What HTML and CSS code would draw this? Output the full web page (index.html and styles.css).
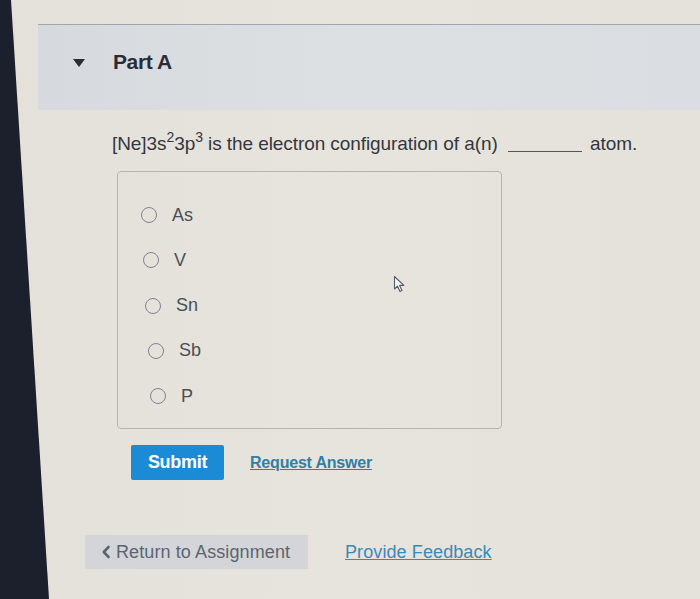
FILE: index.html
```html
<!DOCTYPE html>
<html>
<head>
<meta charset="utf-8">
<link rel="stylesheet" href="styles.css">
</head>
<body>
<div class="bezel"></div>
<div class="page">
  <div class="part-header">
    <span class="caret"></span>
    <span class="part-title">Part A</span>
  </div>
  <div class="content">
    <p class="question">[Ne]3s<sup>2</sup>3p<sup>3</sup> is the electron configuration of a(n) <span class="blank"></span> atom.</p>
    <div class="options">
      <label class="option o1"><span class="radio"></span><span class="label">As</span></label>
      <label class="option o2"><span class="radio"></span><span class="label">V</span></label>
      <label class="option o3"><span class="radio"></span><span class="label">Sn</span></label>
      <label class="option o4"><span class="radio"></span><span class="label">Sb</span></label>
      <label class="option o5"><span class="radio"></span><span class="label">P</span></label>
      <svg class="cursor" width="14" height="18" viewBox="0 0 14 18"><path d="M1.5 1.5 L1.5 14 L4.5 11.2 L7 16.5 L9 15.6 L6.6 10.4 L10.8 10.4 Z" fill="#f4f4f2" stroke="#555b66" stroke-width="1.1" stroke-linejoin="round"/></svg>
    </div>
    <div class="actions">
      <button class="submit">Submit</button>
      <a class="link-bold" href="#">Request Answer</a>
    </div>
  </div>
  <div class="footer">
    <a class="return" href="#"><svg class="chev" width="10" height="14" viewBox="0 0 10 14"><path d="M7.5 2 L2.8 7 L7.5 12" fill="none" stroke="#5d6471" stroke-width="2.6" stroke-linecap="round" stroke-linejoin="round"/></svg>Return to Assignment</a>
    <a class="feedback" href="#">Provide Feedback</a>
  </div>
</div>
</body>
</html>
```
FILE: styles.css
```css
html, body {
  margin: 0;
  padding: 0;
}
body {
  width: 700px;
  height: 599px;
  overflow: hidden;
  position: relative;
  background: linear-gradient(90deg, #e3e1d9 0%, #e6e4dc 50%, #e4e2da 100%);
  font-family: "Liberation Sans", Arial, sans-serif;
  color: #33363d;
}
.bezel {
  position: absolute;
  left: 0;
  top: 0;
  width: 60px;
  height: 599px;
  background: #1c1f2c;
  clip-path: polygon(0 0, 11px 0, 49px 599px, 0 599px);
}
.page {
  padding-top: 24px;
  padding-left: 38px;
}
.part-header {
  height: 86px;
  border-top: 1px solid #a0a6ae;
  background: linear-gradient(90deg, #d6dade 0%, #dde0e3 50%, #dadde1 100%);
  display: flex;
  align-items: flex-start;
  padding-top: 25px;
  box-sizing: border-box;
  padding-left: 35px;
}
.caret {
  width: 0;
  height: 0;
  border-left: 6px solid transparent;
  border-right: 6px solid transparent;
  border-top: 8px solid #2a2d36;
  margin-top: 9px;
}
.part-title {
  margin-left: 28px;
  font-size: 21px;
  font-weight: bold;
  color: #2a2d38;
  letter-spacing: -0.4px;
}
.content {
  padding-left: 74px;
  padding-top: 21px;
}
.question {
  margin: 0;
  font-size: 19px;
  color: #34373e;
  letter-spacing: -0.08px;
  line-height: 26px;
}
.question sup {
  font-size: 14px;
  line-height: 0;
  vertical-align: 8px;
}
.blank {
  display: inline-block;
  width: 74px;
  border-bottom: 1px solid #555;
  margin: 0 3px 0 5px;
  vertical-align: -2px;
}
.options {
  position: relative;
  margin-top: 14px;
  margin-left: 5px;
  width: 385px;
  height: 258px;
  box-sizing: border-box;
  border: 1px solid #b4b4b2;
  border-radius: 4px;
  padding-top: 32px;
  padding-left: 23px;
  display: flex;
  flex-direction: column;
  gap: 23.3px;
}
.option {
  display: flex;
  align-items: center;
  height: 22px;
  font-size: 18px;
  color: #4a4e57;
}
.o2 { padding-left: 2px; }
.o3 { padding-left: 4px; }
.o4 { padding-left: 7px; }
.o5 { padding-left: 9px; }
.radio {
  width: 16px;
  height: 16px;
  border: 1.8px solid #808390;
  border-radius: 50%;
  box-sizing: border-box;
  margin-right: 15px;
}
.cursor {
  position: absolute;
  left: 275px;
  top: 103px;
}
.actions {
  display: flex;
  align-items: center;
  margin-top: 16px;
  margin-left: 19px;
}
.submit {
  width: 93px;
  height: 35px;
  border: none;
  border-radius: 2px;
  background: #1b8bd6;
  color: #fff;
  font-family: "Liberation Sans", Arial, sans-serif;
  font-size: 18px;
  font-weight: bold;
  letter-spacing: -0.3px;
  padding: 0;
}
.link-bold {
  margin-left: 26px;
  font-size: 16px;
  font-weight: bold;
  color: #2f7fa6;
  letter-spacing: -0.2px;
  text-decoration: underline;
}
.footer {
  display: flex;
  align-items: center;
  margin-top: 55px;
  margin-left: 47px;
}
.return {
  width: 223px;
  height: 34px;
  background: #d3d5d8;
  color: #5d6471;
  font-size: 18px;
  text-decoration: none;
  display: flex;
  align-items: center;
  box-sizing: border-box;
  padding-left: 16px;
  letter-spacing: 0.1px;
}
.chev {
  margin-right: 5px;
}
.feedback {
  margin-left: 37px;
  font-size: 18px;
  color: #3a8ab5;
  text-decoration: underline;
  letter-spacing: 0.1px;
}
```
